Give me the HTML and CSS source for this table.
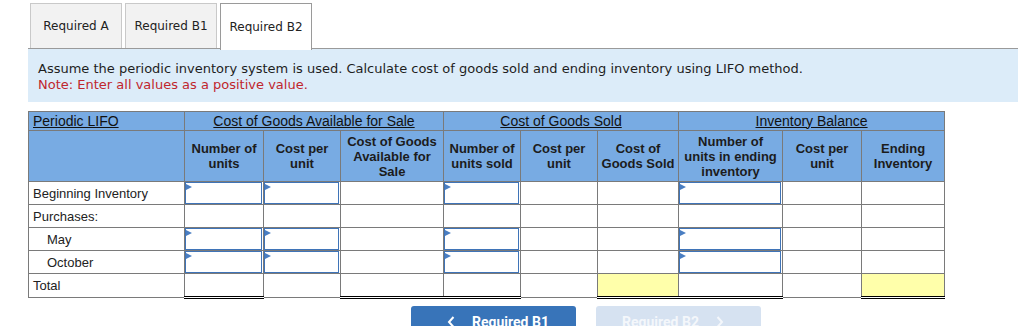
FILE: index.html
```html
<!DOCTYPE html>
<html>
<head>
<meta charset="utf-8">
<link rel="stylesheet" href="styles.css">
</head>
<body>
<div class="page">
  <div class="tabs">
    <div class="tab">Required A</div>
    <div class="tab">Required B1</div>
    <div class="tab active">Required B2</div>
  </div>
  <div class="panel">
    <p class="prompt">Assume the periodic inventory system is used. Calculate cost of goods sold and ending inventory using LIFO method.</p>
    <p class="note">Note: Enter all values as a positive value.</p>
  </div>
  <table class="grid">
    <colgroup>
      <col class="c0"><col class="c1"><col class="c2"><col class="c3"><col class="c4"><col class="c5"><col class="c6"><col class="c7"><col class="c8"><col class="c9">
    </colgroup>
    <thead>
      <tr class="h1">
        <th class="left"><u>Periodic LIFO</u></th>
        <th colspan="3" class="grp"><u>Cost of Goods Available for Sale</u></th>
        <th colspan="3" class="grp"><u>Cost of Goods Sold</u></th>
        <th colspan="3" class="grp"><u>Inventory Balance</u></th>
      </tr>
      <tr class="h2">
        <th></th>
        <th class="grp">Number of units</th>
        <th>Cost per unit</th>
        <th>Cost of Goods Available for Sale</th>
        <th class="grp">Number of units sold</th>
        <th>Cost per unit</th>
        <th>Cost of Goods Sold</th>
        <th class="grp">Number of units in ending inventory</th>
        <th>Cost per unit</th>
        <th>Ending Inventory</th>
      </tr>
    </thead>
    <tbody>
      <tr>
        <td class="label">Beginning Inventory</td>
        <td class="grp in"><div class="box"></div></td>
        <td class="in"><div class="box"></div></td>
        <td></td>
        <td class="grp in"><div class="box"></div></td>
        <td></td>
        <td></td>
        <td class="grp in"><div class="box"></div></td>
        <td></td>
        <td></td>
      </tr>
      <tr>
        <td class="label">Purchases:</td>
        <td class="grp"></td>
        <td></td>
        <td></td>
        <td class="grp"></td>
        <td></td>
        <td></td>
        <td class="grp"></td>
        <td></td>
        <td></td>
      </tr>
      <tr>
        <td class="label sub">May</td>
        <td class="grp in"><div class="box"></div></td>
        <td class="in"><div class="box"></div></td>
        <td></td>
        <td class="grp in"><div class="box"></div></td>
        <td></td>
        <td></td>
        <td class="grp in"><div class="box"></div></td>
        <td></td>
        <td></td>
      </tr>
      <tr>
        <td class="label sub">October</td>
        <td class="grp in"><div class="box"></div></td>
        <td class="in"><div class="box"></div></td>
        <td></td>
        <td class="grp in"><div class="box"></div></td>
        <td></td>
        <td></td>
        <td class="grp in"><div class="box"></div></td>
        <td></td>
        <td></td>
      </tr>
      <tr class="total">
        <td class="label">Total</td>
        <td class="grp tot"></td>
        <td></td>
        <td class="tot"></td>
        <td class="grp tot"></td>
        <td></td>
        <td class="tot yellow"></td>
        <td class="grp tot"></td>
        <td></td>
        <td class="tot yellow"></td>
      </tr>
    </tbody>
  </table>
  <div class="nav">
    <div class="btn prev"><svg class="chev" width="8" height="12" viewBox="0 0 8 12"><path d="M6.5 1 L2 6 L6.5 11" fill="none" stroke="#fff" stroke-width="2"/></svg>Required B1</div>
    <div class="btn next disabled">Required B2<svg class="chev" width="8" height="12" viewBox="0 0 8 12"><path d="M1.5 1 L6 6 L1.5 11" fill="none" stroke="#f4f7fb" stroke-width="2"/></svg></div>
  </div>
</div>
</body>
</html>
```

FILE: styles.css
```css
html, body {
  margin: 0;
  padding: 0;
  background: #fff;
  overflow: hidden;
}
.page {
  padding: 3px 0 0 28px;
  font-family: "Liberation Sans", Arial, sans-serif;
}
.tabs {
  display: flex;
  gap: 3px;
  padding-left: 2px;
  height: 46px;
  position: relative;
  z-index: 1;
}
.tab {
  width: 92px;
  height: 45px;
  box-sizing: border-box;
  border: 1px solid #c9c9c9;
  border-bottom: none;
  background: #f2f2f2;
  font-family: "DejaVu Sans", Verdana, sans-serif;
  font-size: 12px;
  color: #222;
  display: flex;
  align-items: center;
  justify-content: center;
}
.tab.active {
  background: #fff;
  border-color: #9a9a9a;
  height: 47px;
}
.panel {
  background: #dcecf9;
  border-top: 1px solid #9a9a9a;
  margin-top: -1px;
  padding: 12px 10px 5px 10px;
  height: 36px;
}
.panel p {
  margin: 0;
  font-family: "DejaVu Sans", Verdana, sans-serif;
  font-size: 13px;
  line-height: 16px;
  color: #1e1e1e;
}
.panel p.note {
  color: #c0262d;
}
.grid {
  margin-top: 9px;
  border-collapse: collapse;
  table-layout: fixed;
  width: 916px;
  font-size: 13px;
  color: #222;
  border: 1px solid #7a7a7a;
}
.c0 { width: 156px; }
.c1 { width: 79px; }
.c2 { width: 77px; }
.c3 { width: 103px; }
.c4 { width: 77px; }
.c5 { width: 77px; }
.c6 { width: 81px; }
.c7 { width: 104px; }
.c8 { width: 79px; }
.c9 { width: 83px; }
.grid th {
  background: #78abe3;
  color: #1c1c1c;
  border: 1px solid #7a7a7a;
  padding: 0 2px;
  text-align: center;
  line-height: 15px;
}
.grid .h1 th {
  font-weight: normal;
  height: 18px;
  font-size: 14px;
  color: #111;
}
.grid .h1 th.left {
  text-align: left;
  padding-left: 4px;
}
.grid .h2 th {
  height: 50px;
  font-weight: bold;
  font-size: 13px;
}
.grid th.grp, .grid td.grp {
  border-left: 1px solid #000;
}
.grid td {
  height: 22px;
  border: 1px solid #7a7a7a;
  padding: 0;
  position: relative;
}
.grid td.label {
  padding-left: 4px;
  font-size: 13px;
  color: #222;
}
.grid td.label.sub {
  padding-left: 18px;
}
.grid td.in {
  padding: 0;
}
.box {
  margin: 0 1px 0 0;
  border: 1.5px solid #3f74b8;
  box-sizing: border-box;
  height: 22px;
  position: relative;
}
.box::before {
  content: "";
  position: absolute;
  left: 0;
  top: 1px;
  border-left: 6px solid #4a7ec2;
  border-top: 3.5px solid transparent;
  border-bottom: 3.5px solid transparent;
}
.grid td.tot {
  border-top: 1px solid #000;
  border-bottom: 3px double #000;
}
.grid td.yellow {
  background: #ffffaa;
}
.nav {
  display: flex;
  gap: 20px;
  padding-left: 383px;
  margin-top: 7px;
}
.btn {
  width: 165px;
  height: 26px;
  border-radius: 3px;
  color: #fff;
  font-weight: bold;
  font-size: 14px;
  display: flex;
  align-items: center;
  justify-content: center;
  padding-top: 5px;
  box-sizing: border-box;
  font-family: "Roboto", "Liberation Sans", sans-serif;
}
.btn.prev {
  background: #3874b9;
  padding-right: 8px;
}
.btn.disabled {
  background: #d6e2f1;
  color: #f4f7fb;
  padding-left: 6px;
}
.chev {
  margin: 0 17px;
  flex: none;
}
```
